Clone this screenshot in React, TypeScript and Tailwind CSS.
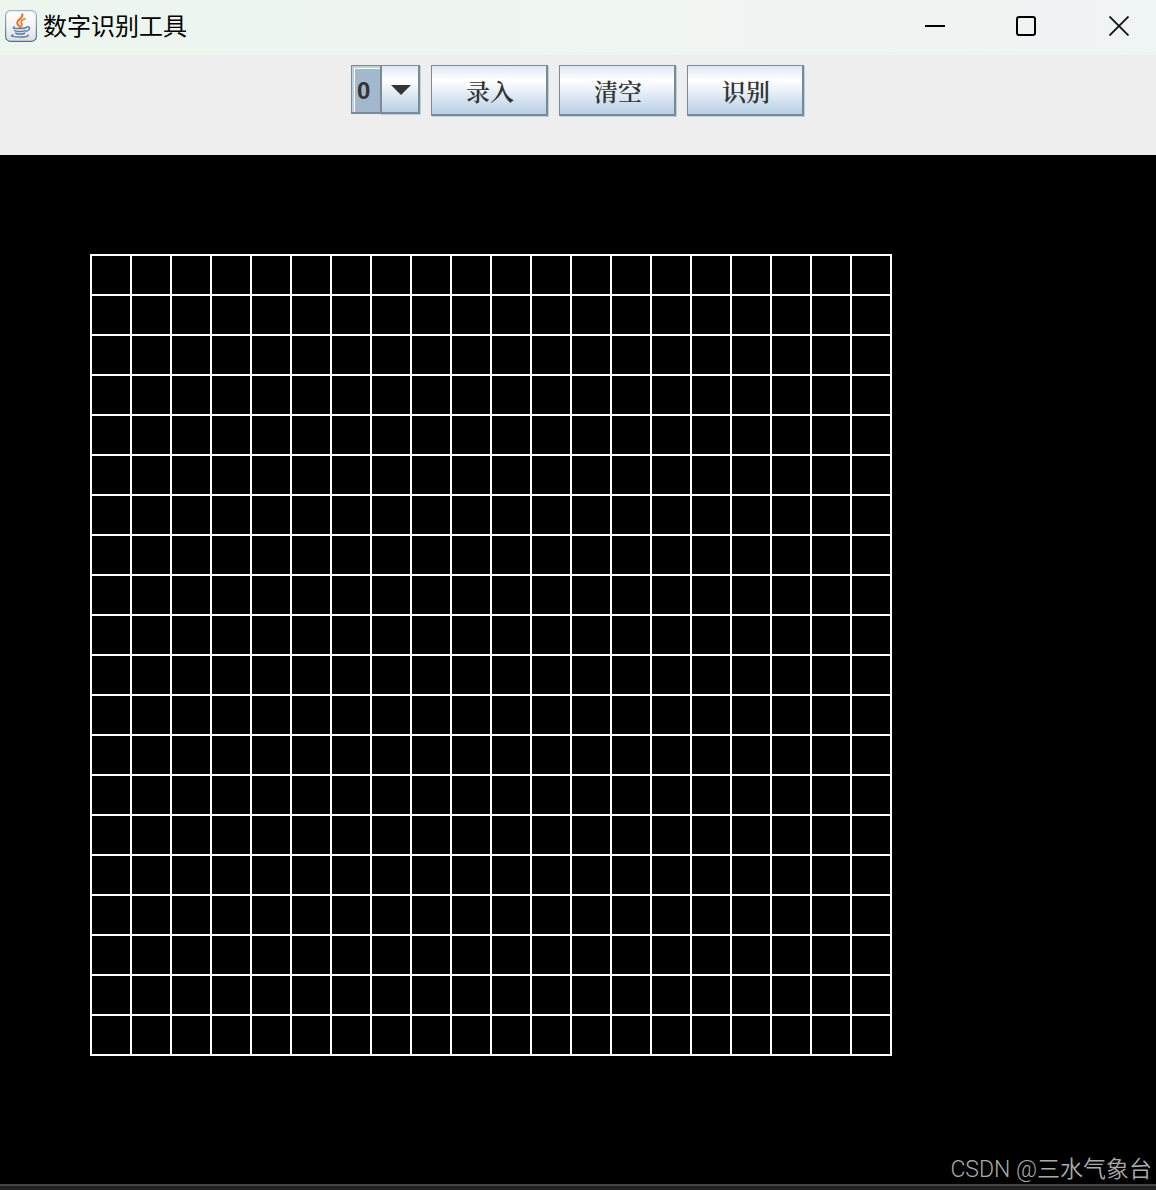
import React, { useState } from 'react';

const GRID_SIZE = 20;
const DIGITS = ['0', '1', '2', '3', '4', '5', '6', '7', '8', '9'];
const ACTIONS = ['录入', '清空', '识别'];

const emptyCells = () => Array<boolean>(GRID_SIZE * GRID_SIZE).fill(false);

function JavaIcon() {
  return (
    <svg viewBox="0 0 32 32" className="h-8 w-8 flex-shrink-0" aria-hidden="true">
      <defs>
        <linearGradient id="tile" x1="0" y1="0" x2="0" y2="1">
          <stop offset="0" stopColor="#ffffff" />
          <stop offset="0.5" stopColor="#f4f4f6" />
          <stop offset="1" stopColor="#dcdde1" />
        </linearGradient>
        <linearGradient id="rim" x1="0" y1="0" x2="0" y2="1">
          <stop offset="0" stopColor="#9db4c9" />
          <stop offset="1" stopColor="#53708c" />
        </linearGradient>
      </defs>
      <rect x="0.6" y="0.6" width="30.8" height="30.8" rx="5" fill="url(#tile)" stroke="url(#rim)" strokeWidth="1.2" />
      <g fill="none" strokeLinecap="round">
        <path d="M17.2 4.5c1.6 3.2-5 5-5 8.2 0 1.8 1.7 2.6 2.8 4.3" stroke="#e8792b" strokeWidth="2.2" />
        <path d="M20 8.8c-2.8 1-4.2 2.2-3.8 3.8.3 1.3 1.5 2 .3 3.8" stroke="#e8792b" strokeWidth="1.7" />
        <path d="M9.2 17c-2 .9-.8 1.6 5.2 1.6 3 0 5.3-.3 6.6-.8" stroke="#5a82a6" strokeWidth="1.5" />
        <path d="M21.6 17c4-1 4 3-.6 4.4" stroke="#5a82a6" strokeWidth="1.5" />
        <path d="M9.6 20.6c2.4 1.3 8 1.2 10.4 0M10.8 23.2c2 1.2 6.8 1.1 8.8 0" stroke="#5a82a6" strokeWidth="1.6" />
        <path d="M7.8 24.8c-4 1.2 1 2.2 7.2 2.2 5.6 0 9.4-.8 8-2" stroke="#5a82a6" strokeWidth="1.4" />
      </g>
    </svg>
  );
}

function TitleBar() {
  return (
    <header className="flex h-[55px] items-start justify-between bg-linear-to-r from-[#ecf5ee] via-[#eff5f1] to-[#eff4f4] text-black">
      <div className="flex items-start gap-[6px] pt-[10px] pl-[5px]">
        <JavaIcon />
        <h1 className="text-[24px] leading-[30px] font-normal">数字识别工具</h1>
      </div>
      <div className="flex h-[52px]">
        <button type="button" aria-label="最小化" className="flex w-[91px] items-center justify-center">
          <svg width="20" height="20" viewBox="0 0 20 20"><path d="M0 10h20" stroke="#000" strokeWidth="2" /></svg>
        </button>
        <button type="button" aria-label="最大化" className="flex w-[91px] items-center justify-center">
          <svg width="20" height="20" viewBox="0 0 20 20"><rect x="1" y="1" width="18" height="18" rx="2" fill="none" stroke="#000" strokeWidth="2" /></svg>
        </button>
        <button type="button" aria-label="关闭" className="flex w-[85px] items-center justify-center pl-[11px]">
          <svg width="20" height="20" viewBox="0 0 20 20"><path d="M.5.5l19 19M19.5.5l-19 19" stroke="#111" strokeWidth="1.8" /></svg>
        </button>
      </div>
    </header>
  );
}

export default function App() {
  const [digit, setDigit] = useState('0');
  const [cells, setCells] = useState<boolean[]>(emptyCells);

  const handleAction = (name: string) => {
    if (name === '清空') setCells(emptyCells());
  };

  const paint = (i: number) => setCells(prev => prev.map((c, n) => (n === i ? true : c)));

  return (
    <div className="flex min-h-screen flex-col bg-black font-['Noto_Sans_CJK_SC',sans-serif]">
      <TitleBar />

      {/* Toolbar */}
      <div className="flex h-[100px] items-start justify-center gap-[10px] bg-[#eeeeee] pt-[10px]">
        <div className="relative h-[50px] w-[70px]">
          <select
            aria-label="数字"
            value={digit}
            onChange={e => setDigit(e.target.value)}
            className="h-[49px] w-[68px] appearance-none border border-b-2 border-[#7a8a99] bg-[#a3b8cc] pt-[3px] pl-[5px] font-['Liberation_Sans',sans-serif] text-[24px] font-bold text-[#333333] shadow-[inset_2px_2px_0_#b8cfe5,inset_3px_3px_0_#ffffff] outline-none"
          >
            {DIGITS.map(d => <option key={d}>{d}</option>)}
          </select>
          <span className="pointer-events-none absolute top-0 right-px flex h-[49px] w-10 items-center justify-center border-2 border-t border-[#7a8a99] bg-linear-to-b from-[#dde8f3] via-white via-30% to-[#b8cfe5] pt-[2px] pl-[2px] shadow-[1px_1px_0_#b8cfe5]">
            <svg width="20" height="10" viewBox="0 0 20 10"><path d="M0 0h20L10 10z" fill="#333" /></svg>
          </span>
        </div>
        {ACTIONS.map(name => (
          <button
            key={name}
            type="button"
            onClick={() => handleAction(name)}
            className="mr-px h-[51px] w-[117px] border border-r-2 border-b-2 border-[#7a8a99] bg-linear-to-b from-[#dde8f3] via-white via-30% to-[#b8cfe5] pt-[2px] pl-[2px] font-['Noto_Serif_CJK_SC','Noto_Sans_CJK_SC',serif] text-[24px] leading-8 font-semibold text-[#333333] shadow-[1px_1px_0_#b8cfe5]"
          >
            {name}
          </button>
        ))}
      </div>

      {/* Drawing area */}
      <main className="flex flex-1 flex-col bg-black pt-[99px]">
        <div className="ml-[90px] grid w-fit grid-cols-[repeat(20,40px)] border-t-2 border-l-2 border-white">
          {cells.map((on, i) => (
            <div
              key={i}
              onMouseDown={() => paint(i)}
              onMouseEnter={e => e.buttons === 1 && paint(i)}
              className={`h-10 border-r-2 border-b-2 border-white ${on ? 'bg-white' : 'bg-black'}`}
            />
          ))}
        </div>
        <p className="mt-auto pr-1 text-right font-['Roboto','Noto_Sans_CJK_SC',sans-serif] text-[23px] leading-7 font-[350] text-[#aaaaaa]">
          CSDN @三水气象台
        </p>
      </main>

      <footer className="h-[6px] border-t-2 border-[#444444] bg-[#222222]" />
    </div>
  );
}
